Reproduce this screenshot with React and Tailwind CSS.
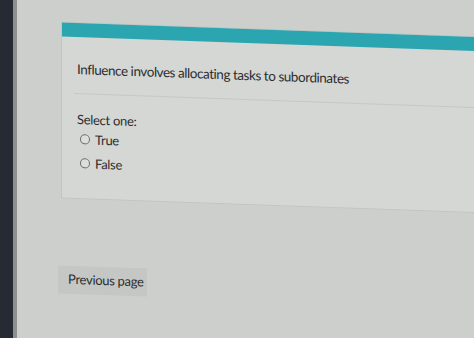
import React from "react";

// Quiz question page, shot at a slight angle: horizontal lines tilt, verticals stay upright
function Radio({ label }) {
  return (
    <label className="flex items-center gap-[5px] h-[14px]">
      <span className="block w-[10px] h-[10px] rounded-full border border-[#6b6d6b] bg-[#dcdedb]" />
      <span>{label}</span>
    </label>
  );
}

export default function App() {
  return (
    <div
      className="w-[474px] h-[338px] flex overflow-hidden bg-[#cdcfcc] text-[#2b2d2f]"
      style={{ fontFamily: "Lato, 'Open Sans', sans-serif" }}
    >
      <div className="w-[13px] shrink-0 bg-[#262a32]" />
      <div className="w-[4px] shrink-0 bg-[#8e908e]" />

      <div className="flex-1 relative overflow-hidden">
        <div className="skew-y-[2deg] origin-top-left pl-[44px] pt-[20px]">
          <div className="w-[440px] border border-[#c3c5c2] bg-[#d5d7d4]">
            <div className="h-[14px] bg-[#2ba6b0]" />
            <div className="pl-[15px] pt-[24px] text-[13.5px] tracking-[-0.45px] leading-[16px] whitespace-nowrap">
              Influence involves allocating tasks to subordinates
            </div>
            <div className="ml-[12px] mt-[16px] border-t border-[#c6c8c5]" />
            <div className="pl-[15px] pt-[17px] pb-[28px] text-[13px] tracking-[-0.3px] leading-[16px]">
              <div>Select one:</div>
              <div className="mt-[5px] pl-[3px] flex flex-col gap-[10px]">
                <Radio label="True" />
                <Radio label="False" />
              </div>
            </div>
          </div>

          <button className="mt-[67px] -ml-[3px] w-[89px] h-[28px] bg-[#c5c7c4] text-[13px] tracking-[-0.3px] text-[#2c2e30] text-left pl-[10px] whitespace-nowrap">
            Previous page
          </button>
        </div>
      </div>
    </div>
  );
}
